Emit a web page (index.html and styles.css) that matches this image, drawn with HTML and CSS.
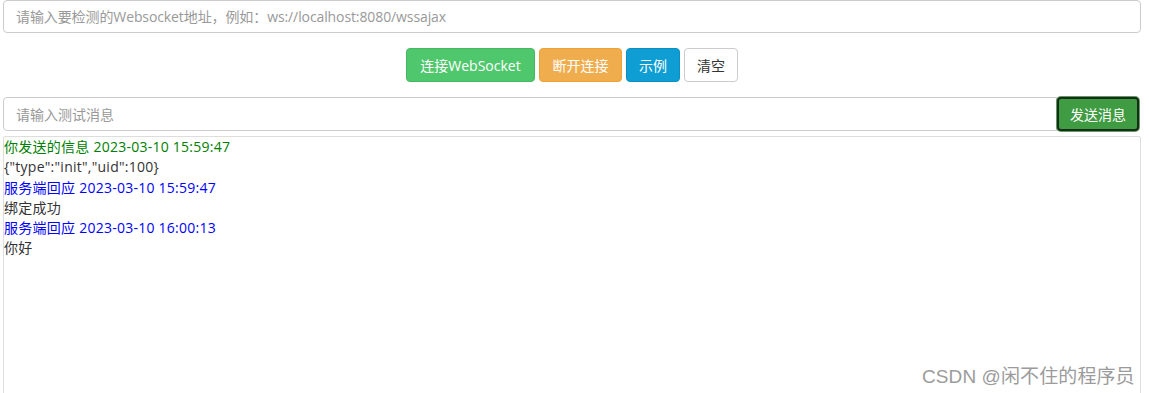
FILE: index.html
```html
<!DOCTYPE html>
<html lang="zh">
<head>
<meta charset="utf-8">
<link rel="stylesheet" href="styles.css">
</head>
<body>
<div class="page">
  <input class="url-input" type="text" placeholder="请输入要检测的Websocket地址，例如：ws://localhost:8080/wssajax">
  <div class="btn-row">
    <button class="btn btn-success">连接WebSocket</button>
    <button class="btn btn-warning">断开连接</button>
    <button class="btn btn-info">示例</button>
    <button class="btn btn-default">清空</button>
  </div>
  <div class="send-row">
    <input class="msg-input" type="text" placeholder="请输入测试消息">
    <button class="btn btn-send">发送消息</button>
  </div>
  <div class="log">
    <div class="sent">你发送的信息 2023-03-10 15:59:47</div>
    <div>{"type":"init","uid":100}</div>
    <div class="recv">服务端回应 2023-03-10 15:59:47</div>
    <div>绑定成功</div>
    <div class="recv">服务端回应 2023-03-10 16:00:13</div>
    <div>你好</div>
  </div>
</div>
<div class="watermark">CSDN @闲不住的程序员</div>
</body>
</html>
```

FILE: styles.css
```css
* { box-sizing: border-box; }
html, body { margin: 0; padding: 0; background: #fff; }
body {
  font-family: "Open Sans", "Noto Sans CJK SC", sans-serif;
  font-size: 14px;
  color: #333;
  overflow: hidden;
  height: 393px;
}
.page {
  width: 1138px;
  margin-left: 3px;
}
input {
  font-family: inherit;
  font-size: 14px;
  color: #555;
  outline: none;
}
input::placeholder { color: #999; }
.url-input {
  display: block;
  width: 1138px;
  height: 33px;
  border: 1px solid #ccc;
  border-radius: 4px;
  padding: 6px 12px;
  letter-spacing: -0.1px;
}
.btn-row {
  display: flex;
  justify-content: center;
  gap: 4px;
  margin-top: 15px;
}
.btn {
  font-family: inherit;
  font-size: 14px;
  height: 34px;
  padding: 0;
  border: 1px solid transparent;
  border-radius: 4px;
  color: #fff;
  cursor: pointer;
}
.btn-success { background: #4fc76d; border-color: #46b862; width: 129px; }
.btn-warning { background: #f0ad4e; border-color: #eea236; width: 83px; }
.btn-info { background: #0e9ed3; border-color: #0c90c2; width: 54px; }
.btn-default { background: #fff; border-color: #ccc; color: #333; width: 54px; }
.send-row {
  display: flex;
  margin-top: 15px;
  margin-right: 2px;
}
.msg-input {
  flex: 1;
  height: 34px;
  border: 1px solid #ccc;
  border-radius: 4px 0 0 4px;
  padding: 6px 12px;
}
.btn-send {
  width: 82px;
  height: 34px;
  background: #3f9c43;
  border: 2px solid #1b2b1b;
  border-radius: 4px;
  box-shadow: 0 0 0 1px #5c9c5c;
}
.log {
  margin-top: 5px;
  height: 262px;
  border: 1px solid #ddd;
  border-radius: 2px;
  padding: 0;
  line-height: 20.3px;
  color: #333;
  letter-spacing: 0.25px;
}
.sent { color: #008000; }
.recv { color: #0000ff; }
.watermark {
  position: absolute;
  left: 922px;
  top: 361px;
  font-size: 19px;
  color: #9b9b9b;
  font-family: "Liberation Sans", "Noto Sans CJK SC", sans-serif;
  letter-spacing: 0.1px;
}
```
